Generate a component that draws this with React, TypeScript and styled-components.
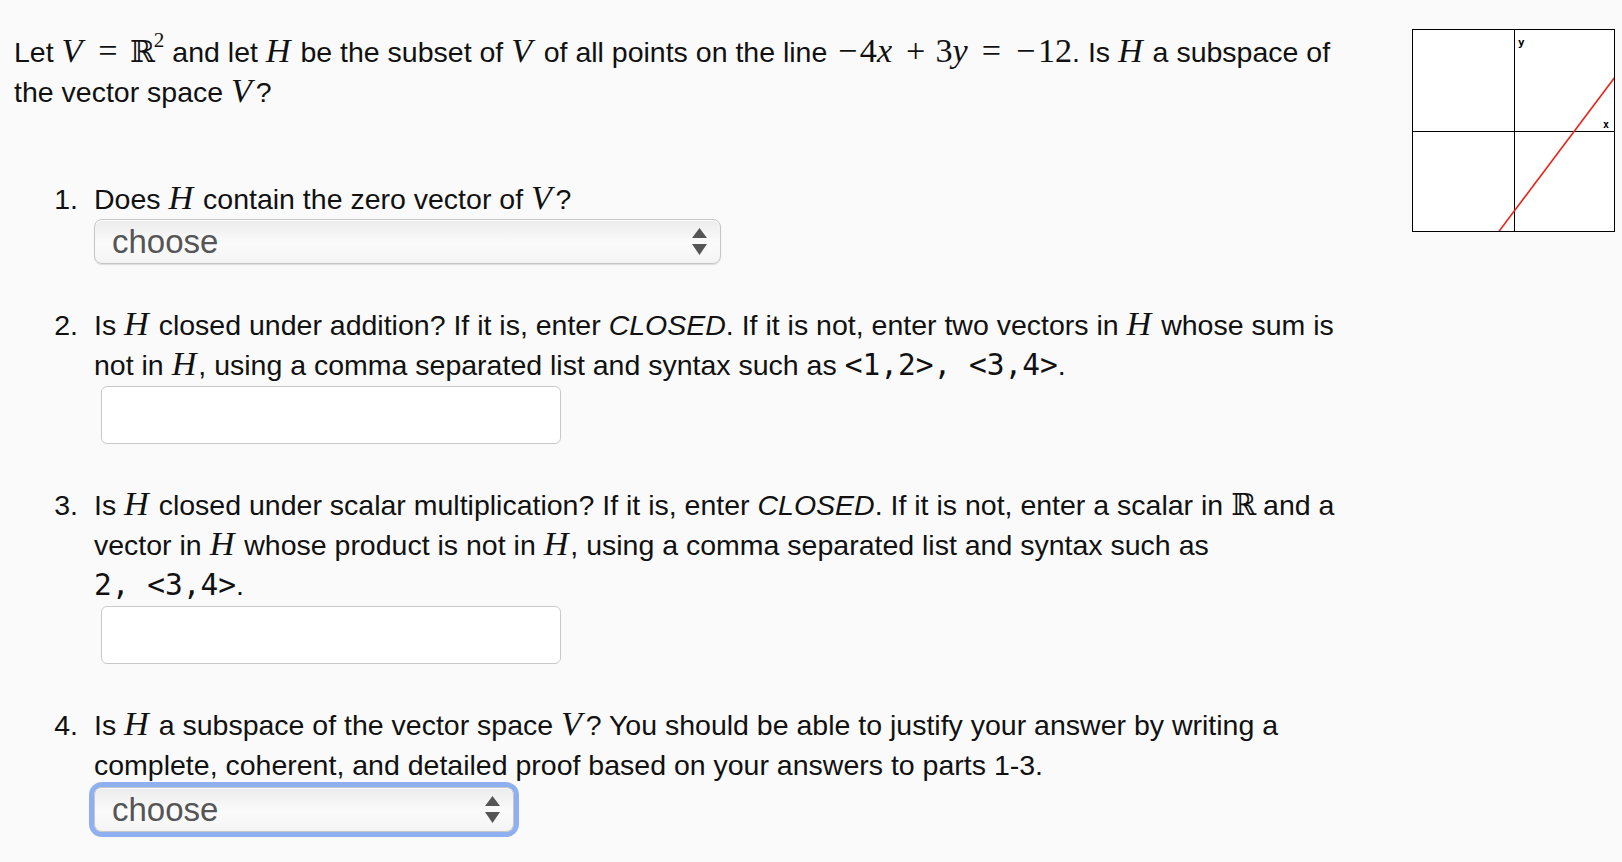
import React from "react";
import styled, { createGlobalStyle } from "styled-components";

const Global = createGlobalStyle`
  html, body { margin: 0; padding: 0; background: #fafafa; }
  body { font-family: "Liberation Sans", Arial, sans-serif; color: #111; }
`;

const Page = styled.div`
  display: flex;
  align-items: flex-start;
  padding: 29px 6px 20px 14px;
  gap: 46px;
`;

const Main = styled.div`
  width: 1352px;
  font-size: 28.5px;
  line-height: 40px;
`;

const Para = styled.p`
  margin: 3px 0 0 0;
`;

const Math = styled.span`
  font-family: "Liberation Serif", "Times New Roman", serif;
  font-size: 1.2em;
  line-height: 0;
  white-space: nowrap;
`;

const Var = styled.i<{ $w: number }>`
  display: inline-block;
  width: ${(p) => p.$w}em;
  font-style: italic;
`;

const Digit = styled.span`
  display: inline-block;
  width: 0.5em;
  text-align: center;
`;

const Sym = styled.span<{ $rel?: boolean; $bin?: boolean }>`
  display: inline-block;
  width: 0.72em;
  text-align: center;
  margin: 0 ${(p) => (p.$rel ? "0.278em" : p.$bin ? "0.222em" : "0")};
`;

const DS = styled.span`
  display: inline-block;
  width: 0.8em;
  font-family: "DejaVu Serif", serif;
  font-size: 0.88em;
`;

const Sup = styled.sup`
  font-size: 0.62em;
  line-height: 0;
  vertical-align: 0.7em;
`;

const Code = styled.code`
  font-family: "DejaVu Sans Mono", "Liberation Mono", monospace;
  font-size: 29.5px;
  white-space: pre;
`;

const List = styled.ol`
  list-style: none;
  margin: 67px 0 0 0;
  padding: 0;
  display: flex;
  flex-direction: column;
  gap: 41px;
`;

const Item = styled.li`
  display: grid;
  grid-template-columns: 80px 1fr;
`;

const Marker = styled.span`
  text-align: right;
  padding-right: 16px;
`;

const Body = styled.div`
  display: flex;
  flex-direction: column;
  align-items: flex-start;
`;

const SelectBox = styled.div<{ $w: number; $focus?: boolean }>`
  box-sizing: border-box;
  flex: none;
  width: ${(p) => p.$w}px;
  height: 45px;
  margin-top: ${(p) => (p.$focus ? 2 : 0)}px;
  display: flex;
  align-items: center;
  justify-content: space-between;
  padding: 0 13px 0 17px;
  border: 1px solid #c6c6c6;
  border-radius: 8px;
  background: linear-gradient(#ececec, #fbfbfb 55%, #f4f4f4);
  box-shadow: inset 0 1px 0 #fff, 0 1px 1px rgba(0, 0, 0, 0.12);
  outline: ${(p) => (p.$focus ? "5px solid #8fb0f0" : "none")};
  outline-offset: 0;
  font-size: 33px;
  color: #555;
  line-height: 1;
`;

const Input = styled.div`
  box-sizing: border-box;
  flex: none;
  width: 460px;
  height: 58px;
  margin: 1px 0 0 7px;
  background: #fff;
  border: 1.5px solid #c9c9c9;
  border-radius: 6px;
`;

const GraphBox = styled.div`
  width: 203px;
  height: 203px;
  flex: none;
  box-sizing: border-box;
  border: 1px solid #000;
  background: #fff;
`;

const Arrows = () => (
  <svg width="15" height="27" viewBox="0 0 15 27">
    <polygon points="7.5,0 15,10 0,10" fill="#555" />
    <polygon points="0,16 15,16 7.5,27" fill="#555" />
  </svg>
);

const Select = ({ w, focus }: { w: number; focus?: boolean }) => (
  <SelectBox $w={w} $focus={focus}>
    <span>choose</span>
    <Arrows />
  </SelectBox>
);

const Graph = () => (
  <GraphBox>
    <svg width="201" height="201" viewBox="0 0 201 201">
      <line x1="101.5" y1="0" x2="101.5" y2="201" stroke="#000" strokeWidth="1" />
      <line x1="0" y1="101.5" x2="201" y2="101.5" stroke="#000" strokeWidth="1" />
      <line x1="85.5" y1="202" x2="202" y2="47" stroke="#e8271c" strokeWidth="1.6" />
      <text x="105" y="16" fontFamily="DejaVu Sans Mono, monospace" fontSize="11" fontWeight="bold" fill="#000">y</text>
      <text x="190" y="98" fontFamily="DejaVu Sans Mono, monospace" fontSize="10" fontWeight="bold" fill="#000">x</text>
    </svg>
  </GraphBox>
);

const H = () => (
  <Math>
    <Var $w={0.78}>H</Var>
  </Math>
);
const V = () => (
  <Math>
    <Var $w={0.72}>V</Var>
  </Math>
);
const R = () => (
  <Math>
    <DS>ℝ</DS>
  </Math>
);

export default function App() {
  return (
    <>
      <Global />
      <Page>
        <Main>
          <Para>
            Let{" "}
            <Math>
              <Var $w={0.72}>V</Var>
              <Sym $rel>=</Sym>
              <DS>ℝ</DS>
              <Sup>2</Sup>
            </Math>{" "}
            and let <H /> be the subset of <V /> of all points on the line{" "}
            <Math>
              <Sym>−</Sym>
              <Digit>4</Digit>
              <Var $w={0.55}>x</Var>
              <Sym $bin>+</Sym>
              <Digit>3</Digit>
              <Var $w={0.5}>y</Var>
              <Sym $rel>=</Sym>
              <Sym>−</Sym>
              <Digit>1</Digit>
              <Digit>2</Digit>
            </Math>
            . Is <H /> a subspace of the vector space <V />?
          </Para>
          <List>
            <Item>
              <Marker>1.</Marker>
              <Body>
                <div>
                  Does <H /> contain the zero vector of <V />?
                </div>
                <Select w={627} />
              </Body>
            </Item>
            <Item>
              <Marker>2.</Marker>
              <Body>
                <div>
                  Is <H /> closed under addition? If it is, enter <i>CLOSED</i>. If it is not, enter two vectors in{" "}
                  <H /> whose sum is not in <H />, using a comma separated list and syntax such as{" "}
                  <Code>&lt;1,2&gt;, &lt;3,4&gt;</Code>.
                </div>
                <Input />
              </Body>
            </Item>
            <Item>
              <Marker>3.</Marker>
              <Body>
                <div>
                  Is <H /> closed under scalar multiplication? If it is, enter <i>CLOSED</i>. If it is not, enter a
                  scalar in <R /> and a vector in <H /> whose product is not in <H />, using a comma separated list and
                  syntax such as <Code>2, &lt;3,4&gt;</Code>.
                </div>
                <Input />
              </Body>
            </Item>
            <Item>
              <Marker>4.</Marker>
              <Body>
                <div>
                  Is <H /> a subspace of the vector space <V />? You should be able to justify your answer by writing a
                  complete, coherent, and detailed proof based on your answers to parts 1-3.
                </div>
                <Select w={420} focus />
              </Body>
            </Item>
          </List>
        </Main>
        <Graph />
      </Page>
    </>
  );
}
